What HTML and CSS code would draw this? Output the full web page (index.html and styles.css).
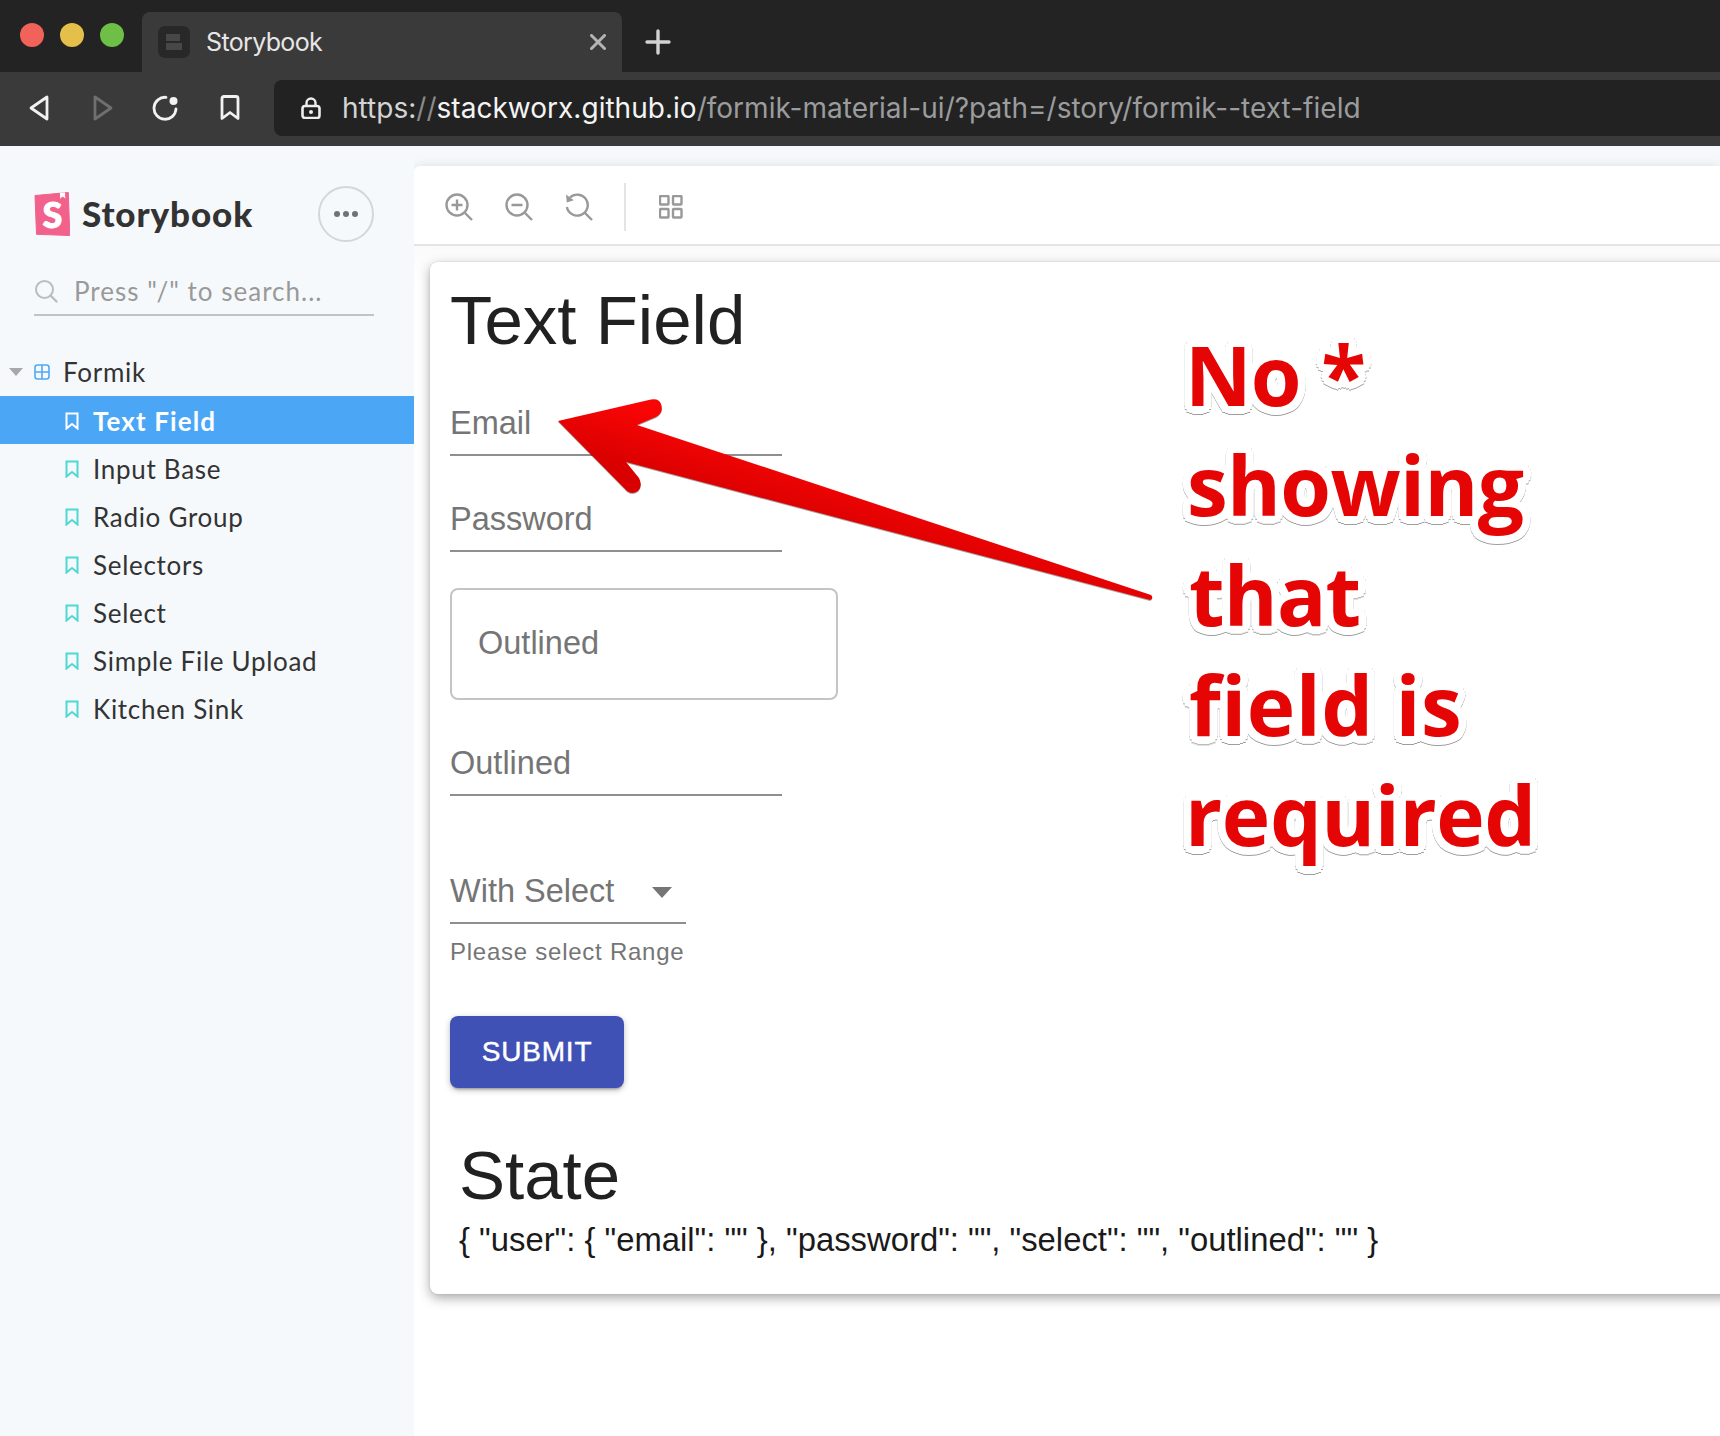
FILE: index.html
```html
<!DOCTYPE html>
<html lang="en">
<head>
<meta charset="utf-8">
<title>Storybook</title>
<link rel="stylesheet" href="styles.css">
</head>
<body>
<div class="tabstrip">
  <div class="lights"><i class="light red"></i><i class="light yellow"></i><i class="light green"></i></div>
  <div class="tab">
    <span class="favicon"><i class="mark mark-a"></i><i class="mark mark-b"></i></span>
    <span class="tab-title">Storybook</span>
    <svg class="tab-close" width="16" height="16" viewBox="0 0 16 16"><path d="M1.5 1.5l13 13M14.5 1.5l-13 13" stroke="#b4b4b4" stroke-width="3" stroke-linecap="round"/></svg>
  </div>
  <svg class="tab-new" width="26" height="26" viewBox="0 0 26 26"><path d="M2 13h22M13 2v22" stroke="#d2d2d2" stroke-width="3.4" stroke-linecap="round"/></svg>
</div>
<div class="toolbar">
  <svg class="nav nav-back" width="20" height="26" viewBox="0 0 20 26"><path d="M18 2v22L2 13z" fill="none" stroke="#f2f2f2" stroke-width="2.8" stroke-linejoin="round"/></svg>
  <svg class="nav nav-forward" width="20" height="26" viewBox="0 0 20 26"><path d="M2 2v22l16-11z" fill="none" stroke="#6f6f6f" stroke-width="2.8" stroke-linejoin="round"/></svg>
  <svg class="nav nav-reload" width="28" height="26" viewBox="0 0 28 26"><path d="M15 2.300A11 11 0 1 0 25 14" fill="none" stroke="#f2f2f2" stroke-width="2.8" stroke-linecap="round"/><circle cx="22.500" cy="6" r="4" fill="#f2f2f2"/></svg>
  <svg class="nav nav-mark" width="20" height="26" viewBox="0 0 20 26"><path d="M2 3.500q0-2 2-2h12q2 0 2 2V23.500L10 17.500l-8 6z" fill="none" stroke="#f2f2f2" stroke-width="2.800" stroke-linejoin="round"/></svg>
  <div class="urlbar">
    <svg class="lock" width="20" height="22" viewBox="0 0 20 22"><path d="M5.500 9V6a4.500 4.500 0 0 1 9 0v3" fill="none" stroke="#eee" stroke-width="2.400"/><rect x="1.500" y="9" width="17" height="12" rx="2.500" fill="none" stroke="#eee" stroke-width="2.600"/><circle cx="10" cy="15" r="2" fill="#eee"/></svg>
    <span class="url"><span class="url-scheme">https:</span><span class="url-slash">//</span><span class="url-host">stackworx.github.io</span><span class="url-path">/formik-material-ui/?path=/story/formik--text-field</span></span>
  </div>
</div>
<div class="app">
  <aside class="sidebar">
    <div class="brand">
      <span class="logo">
        <svg width="36" height="44" viewBox="0 0 36 44"><path d="M1 3.500 34.300.500 35.800 43.500 2.500 42.300z" fill="#f1618c" stroke="#f1618c" stroke-width="1" stroke-linejoin="round"/><path d="M26 .8l5-.4.300 6.100-2.700-2-2.500 2.200z" fill="#fff"/></svg>
        <span class="logo-s">S</span>
      </span>
      <span class="brand-name">Storybook</span>
      <span class="more"><i></i><i></i><i></i></span>
    </div>
    <div class="search">
      <svg width="24" height="24" viewBox="0 0 24 24"><circle cx="10.500" cy="10.500" r="8.500" fill="none" stroke="#b9bdc1" stroke-width="2"/><path d="M16.500 16.500l6 6" stroke="#b9bdc1" stroke-width="2.400" stroke-linecap="round"/></svg>
      <span>Press "/" to search...</span>
    </div>
    <nav class="tree">
      <div class="group">
        <i class="caret"></i>
        <svg width="16" height="16" viewBox="0 0 16 16"><rect x="1" y="1" width="14" height="14" rx="2.500" fill="none" stroke="#4fa8f5" stroke-width="1.600"/><path d="M8 1v14M1 8h14" stroke="#4fa8f5" stroke-width="1.600"/></svg>
        <span>Formik</span>
      </div>
      <a class="row active"><svg width="14" height="18" viewBox="0 0 14 18"><path class="bm" d="M1.500 1.500h11v15L7 12l-5.500 4.500z"/></svg><span>Text Field</span></a>
      <a class="row"><svg width="14" height="18" viewBox="0 0 14 18"><path class="bm" d="M1.500 1.500h11v15L7 12l-5.500 4.500z"/></svg><span>Input Base</span></a>
      <a class="row"><svg width="14" height="18" viewBox="0 0 14 18"><path class="bm" d="M1.500 1.500h11v15L7 12l-5.500 4.500z"/></svg><span>Radio Group</span></a>
      <a class="row"><svg width="14" height="18" viewBox="0 0 14 18"><path class="bm" d="M1.500 1.500h11v15L7 12l-5.500 4.500z"/></svg><span>Selectors</span></a>
      <a class="row"><svg width="14" height="18" viewBox="0 0 14 18"><path class="bm" d="M1.500 1.500h11v15L7 12l-5.500 4.500z"/></svg><span>Select</span></a>
      <a class="row"><svg width="14" height="18" viewBox="0 0 14 18"><path class="bm" d="M1.500 1.500h11v15L7 12l-5.500 4.500z"/></svg><span>Simple File Upload</span></a>
      <a class="row"><svg width="14" height="18" viewBox="0 0 14 18"><path class="bm" d="M1.500 1.500h11v15L7 12l-5.500 4.500z"/></svg><span>Kitchen Sink</span></a>
    </nav>
  </aside>
  <main class="main">
    <div class="canvas">
      <div class="canvas-bar">
        <svg class="tool" width="28" height="28" viewBox="0 0 28 28"><circle cx="12" cy="12" r="10.500" class="ts"/><path d="M20 20l7 7M12 6.500v11M6.500 12h11" class="ts"/></svg>
        <svg class="tool" width="28" height="28" viewBox="0 0 28 28"><circle cx="12" cy="12" r="10.500" class="ts"/><path d="M20 20l7 7M6.500 12h11" class="ts"/></svg>
        <svg class="tool" width="28" height="28" viewBox="0 0 28 28"><path d="M5 4.500A10.500 10.500 0 1 1 1.900 14" class="ts"/><path d="M20 20l7 7" class="ts"/><path d="M1 1.500l.8 8 7-2.300z" fill="#999"/></svg>
        <i class="bar-divider"></i>
        <svg class="grid" width="24" height="24" viewBox="0 0 24 24"><rect x="1" y="1" width="8.500" height="8.500" rx=".8" class="ts"/><rect x="14" y="1" width="8.500" height="8.500" rx=".8" class="ts"/><rect x="1" y="14" width="8.500" height="8.500" rx=".8" class="ts"/><rect x="14" y="14" width="8.500" height="8.500" rx=".8" class="ts"/></svg>
      </div>
      <div class="preview">
        <section class="card">
          <h1 class="title">Text Field</h1>
          <div class="field">Email</div>
          <div class="field field-next">Password</div>
          <div class="outlined">Outlined</div>
          <div class="field field-after-box">Outlined</div>
          <div class="field field-select"><span>With Select</span><i class="select-caret"></i></div>
          <p class="helper">Please select Range</p>
          <button class="submit" type="button">SUBMIT</button>
          <h2 class="state">State</h2>
          <p class="json">{ "user": { "email": "" }, "password": "", "select": "", "outlined": "" }</p>
        </section>
      </div>
    </div>
  </main>
</div>
<svg class="arrow" width="620" height="220" viewBox="545 390 620 220">
  <defs><linearGradient id="redfill" gradientUnits="userSpaceOnUse" x1="620" y1="405" x2="603" y2="463"><stop offset="0" stop-color="#f80505"/><stop offset="1" stop-color="#d80000"/></linearGradient></defs>
  <path d="M558 421 651 399.500Q659 398 661 404 664 413 656 417L637 425 1151 595Q1154 598 1150 600L626 462 639 478Q643 486 638 491 632 495 627 491z" fill="url(#redfill)"/>
</svg>
<div class="annotation">
  <div>No *</div>
  <div class="ln-showing">showing</div>
  <div class="ln-that">that</div>
  <div class="ln-field">field is</div>
  <div class="ln-required">required</div>
</div>
</body>
</html>
```
FILE: styles.css
```css
* { box-sizing: border-box; }
html, body { margin: 0; padding: 0; }
body {
  width: 1720px;
  height: 1436px;
  overflow: hidden;
  position: relative;
  display: flex;
  flex-direction: column;
  background: #fff;
  font-family: "Liberation Sans", Arial, sans-serif;
}
i { display: block; }

/* browser chrome */
.tabstrip { height: 72px; flex: none; background: #232323; display: flex; align-items: flex-end; }
.lights { display: flex; gap: 16px; padding-left: 20px; align-self: flex-start; margin-top: 23px; }
.light { width: 24px; height: 24px; border-radius: 50%; }
.red { background: #f1635a; }
.yellow { background: #e4c04a; }
.green { background: #6dbf46; }
.tab { width: 480px; height: 60px; margin-left: 18px; background: #3a3a3a; border-radius: 8px 8px 0 0; display: flex; align-items: center; padding: 0 16px; }
.favicon { width: 32px; height: 32px; border-radius: 7px; background: #282828; display: flex; flex-direction: column; justify-content: center; align-items: center; gap: 2px; }
.mark { background: #474747; height: 7px; }
.mark-a { width: 14px; margin-right: 2px; }
.mark-b { width: 16px; }
.tab-title { margin-left: 16px; font: 400 25px "Inter", sans-serif; color: #e6e6e6; letter-spacing: -.65px; }
.tab-close { margin-left: auto; }
.tab-new { margin: 0 0 17px 23px; }
.toolbar { height: 74px; flex: none; background: #3a3a3a; display: flex; align-items: center; padding-left: 29px; padding-bottom: 2px; }
.nav { flex: none; }
.nav-forward { margin-left: 44px; }
.nav-reload { margin-left: 38px; }
.nav-mark { margin-left: 41px; }
.urlbar { margin-left: 34px; flex: 1; margin-right: -20px; height: 56px; border-radius: 8px; background: #222; display: flex; align-items: center; padding-left: 27px; }
.lock { flex: none; }
.url { margin-left: 21px; font: 400 28px "Inter", sans-serif; letter-spacing: .02px; white-space: nowrap; }
.url-scheme { color: #d4d4d4; }
.url-slash { color: #8a8a8a; }
.url-host { color: #f4f4f4; }
.url-path { color: #9a9c9e; }

/* storybook */
.app { flex: 1; display: flex; min-height: 0; background: #f6f9fc; }
.sidebar { width: 414px; flex: none; padding-top: 40px; font-family: "Lato", sans-serif; color: #333; }
.brand { display: flex; align-items: center; height: 56px; padding: 0 40px 0 34px; }
.logo { position: relative; width: 36px; height: 44px; flex: none; display: block; }
.logo svg { display: block; }
.logo-s { position: absolute; left: 0; right: -1px; top: 0; text-align: center; font: 900 36px/44px "Lato", sans-serif; color: #fff; -webkit-text-stroke: .9px #fff; }
.brand-name { margin: -2px 0 0 12px; font: 900 35px "Lato", sans-serif; color: #333; letter-spacing: .9px; }
.more { margin-left: auto; width: 56px; height: 56px; border-radius: 50%; border: 2px solid #d4d7da; display: flex; align-items: center; justify-content: center; gap: 3px; }
.more i { width: 6px; height: 6px; border-radius: 50%; background: #6f7378; }
.search { margin: 28px 40px 0 34px; height: 46px; border-bottom: 2px solid #c0c4c8; display: flex; align-items: center; gap: 16px; font-size: 26px; letter-spacing: 1px; color: #999; padding-bottom: 2px; }
.tree { margin-top: 32px; font-size: 26px; letter-spacing: .7px; }
.group { height: 48px; display: flex; align-items: center; padding-left: 9px; }
.caret { width: 0; height: 0; border-left: 7px solid transparent; border-right: 7px solid transparent; border-top: 8px solid #a8a8a8; margin-right: 11px; }
.group span { margin-left: 13px; color: #333; }
.row { height: 48px; display: flex; align-items: center; padding: 1px 0 0 65px; color: #333; }
.row span { margin-left: 14px; }
.bm { fill: none; stroke: #4fd8d0; stroke-width: 2; }
.row.active { background: #4ba6f5; color: #fff; font-weight: 700; letter-spacing: 1.100px; }
.row.active .bm { stroke: #fff; }

.main { flex: 1; min-width: 0; padding-top: 20px; overflow: hidden; }
.canvas { height: 100%; background: #fff; border-radius: 6px 0 0 0; box-shadow: 0 0 12px rgba(0, 0, 0, .1); }
.canvas-bar { height: 80px; border-bottom: 2px solid #e4e4e4; display: flex; align-items: center; padding: 3px 0 0 31px; }
.tool { margin-right: 32px; flex: none; }
.ts { fill: none; stroke: #999; stroke-width: 2.400; }
.bar-divider { width: 2px; height: 48px; background: #e4e4e4; margin-left: -1px; }
.grid { margin-left: 33px; }
.preview { background: linear-gradient(#fafafa, #fff 40px); padding: 16px 0 0 16px; height: 1190px; overflow: hidden; }
.card { width: 1320px; height: 1032px; background: #fff; border-radius: 8px; box-shadow: 0 4px 12px rgba(0, 0, 0, .34), 0 0 2px rgba(0, 0, 0, .12); padding: 19px 0 0 20px; display: flex; flex-direction: column; align-items: flex-start; color: #212121; }
.title { margin: 0 0 42px; font-size: 69px; line-height: 80px; font-weight: 400; }
.field { width: 332px; height: 53px; line-height: 41px; font-size: 32.500px; color: #757575; border-bottom: 2px solid #8f8f8f; }
.field-next { margin-top: 43px; }
.outlined { margin-top: 36px; width: 388px; height: 112px; border: 2px solid #c4c4c4; border-radius: 8px; padding: 0 0 1px 26px; display: flex; align-items: center; font-size: 32.500px; color: #757575; }
.field-after-box { margin-top: 43px; }
.field-select { margin-top: 75px; width: 236px; display: flex; }
.select-caret { width: 0; height: 0; margin: 16px 0 0 38px; border-left: 10px solid transparent; border-right: 10px solid transparent; border-top: 11px solid #757575; }
.helper { margin: 12px 0 0; font-size: 24px; line-height: 32px; letter-spacing: .75px; color: #757575; }
.submit { margin-top: 48px; width: 174px; height: 72px; border: 0; border-radius: 8px; background: #3f51b5; color: #fff; font: 400 28px "Liberation Sans", Arial, sans-serif; letter-spacing: .8px; -webkit-text-stroke: .45px #fff; box-shadow: 0 3px 3px -2px rgba(0, 0, 0, .3), 0 2px 6px rgba(0, 0, 0, .25); }
.state { margin: 48px 0 0 9px; font-size: 69px; line-height: 80px; font-weight: 400; }
.json { margin: 4px 0 0 9px; font-size: 32.820px; line-height: 40px; color: #1a1a1a; white-space: nowrap; }

/* hand-drawn annotations over the screenshot */
.arrow { position: absolute; left: 545px; top: 390px; filter: drop-shadow(0 1px .5px rgba(0, 0, 0, .35)); }
.annotation {
  position: absolute;
  left: 1185px;
  top: 319px;
  font: 700 82px/110px "Open Sans", sans-serif;
  letter-spacing: -.8px;
  color: #e60505;
  white-space: nowrap;
  text-shadow: 8px 0 0 #fff, 7.400px 3px 0 #fff, 5.700px 5.700px 0 #fff, 3px 7.400px 0 #fff, 0 8px 0 #fff, -3px 7.400px 0 #fff, -5.700px 5.700px 0 #fff, -7.400px 3px 0 #fff, -8px 0 0 #fff, -7.400px -3px 0 #fff, -5.700px -5.700px 0 #fff, -3px -7.400px 0 #fff, 0 -8px 0 #fff, 3px -7.400px 0 #fff, 5.700px -5.700px 0 #fff, 7.400px -3px 0 #fff, 5px 0 0 #fff, -5px 0 0 #fff, 0 5px 0 #fff, 0 -5px 0 #fff;
  filter: drop-shadow(0 1px .6px rgba(0, 0, 0, .38));
}
.ln-showing { margin-left: 2px; letter-spacing: -.65px; }
.ln-that { margin-left: 4px; }
.ln-field { margin-left: 4px; letter-spacing: .5px; }
.ln-required { letter-spacing: -.4px; }
```
